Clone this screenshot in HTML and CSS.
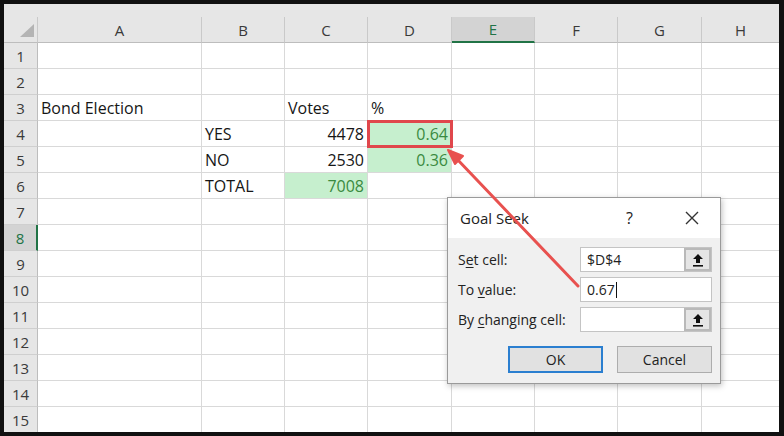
FILE: index.html
```html
<!DOCTYPE html>
<html>
<head>
<meta charset="utf-8">
<link rel="stylesheet" href="styles.css">
</head>
<body>
<div class="frame">
  <div class="strip"></div>
  <div class="sheet">
    <div class="hd corner"><span class="tri"></span></div>
    <div class="hd">A</div><div class="hd">B</div><div class="hd">C</div><div class="hd">D</div><div class="hd sel-col">E</div><div class="hd">F</div><div class="hd">G</div><div class="hd">H</div>

    <div class="rh">1</div><div class="c"></div><div class="c"></div><div class="c"></div><div class="c"></div><div class="c"></div><div class="c"></div><div class="c"></div><div class="c"></div>
    <div class="rh">2</div><div class="c"></div><div class="c"></div><div class="c"></div><div class="c"></div><div class="c"></div><div class="c"></div><div class="c"></div><div class="c"></div>
    <div class="rh">3</div><div class="c">Bond Election</div><div class="c"></div><div class="c">Votes</div><div class="c">%</div><div class="c"></div><div class="c"></div><div class="c"></div><div class="c"></div>
    <div class="rh">4</div><div class="c"></div><div class="c">YES</div><div class="c num">4478</div><div class="c num good boxed">0.64</div><div class="c"></div><div class="c"></div><div class="c"></div><div class="c"></div>
    <div class="rh">5</div><div class="c"></div><div class="c">NO</div><div class="c num">2530</div><div class="c num good">0.36</div><div class="c"></div><div class="c"></div><div class="c"></div><div class="c"></div>
    <div class="rh">6</div><div class="c"></div><div class="c">TOTAL</div><div class="c num good">7008</div><div class="c"></div><div class="c"></div><div class="c"></div><div class="c"></div><div class="c"></div>
    <div class="rh">7</div><div class="c"></div><div class="c"></div><div class="c"></div><div class="c"></div><div class="c"></div><div class="c"></div><div class="c"></div><div class="c"></div>
    <div class="rh sel-row">8</div><div class="c"></div><div class="c"></div><div class="c"></div><div class="c"></div><div class="c"></div><div class="c"></div><div class="c"></div><div class="c"></div>
    <div class="rh">9</div><div class="c"></div><div class="c"></div><div class="c"></div><div class="c"></div><div class="c"></div><div class="c"></div><div class="c"></div><div class="c"></div>
    <div class="rh">10</div><div class="c"></div><div class="c"></div><div class="c"></div><div class="c"></div><div class="c"></div><div class="c"></div><div class="c"></div><div class="c"></div>
    <div class="rh">11</div><div class="c"></div><div class="c"></div><div class="c"></div><div class="c"></div><div class="c"></div><div class="c"></div><div class="c"></div><div class="c"></div>
    <div class="rh">12</div><div class="c"></div><div class="c"></div><div class="c"></div><div class="c"></div><div class="c"></div><div class="c"></div><div class="c"></div><div class="c"></div>
    <div class="rh">13</div><div class="c"></div><div class="c"></div><div class="c"></div><div class="c"></div><div class="c"></div><div class="c"></div><div class="c"></div><div class="c"></div>
    <div class="rh">14</div><div class="c"></div><div class="c"></div><div class="c"></div><div class="c"></div><div class="c"></div><div class="c"></div><div class="c"></div><div class="c"></div>
    <div class="rh">15</div><div class="c"></div><div class="c"></div><div class="c"></div><div class="c"></div><div class="c"></div><div class="c"></div><div class="c"></div><div class="c"></div>
  </div>

  <div class="dialog">
    <div class="dtitle">
      <span class="dname">Goal Seek</span>
      <span class="dq">?</span>
      <span class="dx"><svg width="16" height="16" viewBox="0 0 16 16"><path d="M2 2 L14 14 M14 2 L2 14" stroke="#333" stroke-width="1.4" fill="none"/></svg></span>
    </div>
    <div class="dbody">
      <div class="frow">
        <span class="lbl">S<u>e</u>t cell:</span>
        <div class="inp"><span class="val">$D$4</span><span class="pick"><svg width="12" height="14" viewBox="0 0 12 14"><path d="M6 1 L11 6 L8 6 L8 10 L4 10 L4 6 L1 6 Z" fill="#111"/><rect x="1" y="12" width="10" height="1.6" fill="#111"/></svg></span></div>
      </div>
      <div class="frow">
        <span class="lbl">To <u>v</u>alue:</span>
        <div class="inp"><span class="val">0.67<span class="caret"></span></span></div>
      </div>
      <div class="frow">
        <span class="lbl">By <u>c</u>hanging cell:</span>
        <div class="inp"><span class="val"></span><span class="pick"><svg width="12" height="14" viewBox="0 0 12 14"><path d="M6 1 L11 6 L8 6 L8 10 L4 10 L4 6 L1 6 Z" fill="#111"/><rect x="1" y="12" width="10" height="1.6" fill="#111"/></svg></span></div>
      </div>
      <div class="brow">
        <button class="btn ok">OK</button>
        <button class="btn">Cancel</button>
      </div>
    </div>
  </div>

  <svg class="arrow" width="784" height="436" viewBox="0 0 784 436">
    <line x1="578" y1="286" x2="456" y2="158" stroke="#e8514f" stroke-width="3" stroke-linecap="round"/>
    <path d="M448 150 L463 156 L455 164 Z" fill="#e8514f" stroke="#e8514f" stroke-width="2" stroke-linejoin="round"/>
  </svg>
</div>
</body>
</html>
```
FILE: styles.css
```css
* { box-sizing: border-box; }
html, body { margin: 0; padding: 0; background: #fff; }
body { font-family: "Open Sans", "Liberation Sans", sans-serif; color: #222; }

.frame {
  position: relative;
  width: 784px;
  height: 436px;
  border-style: solid;
  border-color: #111;
  border-width: 4px 5px 4px 4px;
  overflow: hidden;
  background: #fff;
}

.strip { height: 13px; background: #e6e6e6; }

.sheet {
  display: grid;
  grid-template-columns: 34px 164px 83px 83px 84px 83px 83px 84px 78px;
  grid-auto-rows: 26px;
}

.hd {
  background: #e6e6e6;
  border-right: 1px solid #c9c9c9;
  border-bottom: 1px solid #bdbdbd;
  display: flex;
  align-items: center;
  justify-content: center;
  font-size: 15px;
  color: #3a3a3a;
}
.hd.sel-col { background: #d3d3d3; border-bottom: 2px solid #217346; color: #217346; }

.corner { position: relative; }
.tri {
  position: absolute;
  right: 3px;
  bottom: 5px;
  width: 0; height: 0;
  border-left: 14px solid transparent;
  border-bottom: 13px solid #b4b4b4;
}

.rh {
  background: #e6e6e6;
  border-right: 1px solid #bdbdbd;
  border-bottom: 1px solid #cfcfcf;
  display: flex;
  align-items: center;
  justify-content: center;
  font-size: 15px;
  color: #3a3a3a;
}
.rh.sel-row { background: #d3d3d3; border-right: 2px solid #217346; color: #217346; }

.c {
  border-right: 1px solid #d9d9d9;
  border-bottom: 1px solid #d9d9d9;
  display: flex;
  align-items: center;
  padding: 0 3px;
  font-size: 16px;
  white-space: nowrap;
  color: #161616;
}
.c.num { justify-content: flex-end; }
.c.good { background: #c6efce; color: #3a8a3f; }
.c.boxed { outline: 3px solid #e0474c; outline-offset: -2px; position: relative; z-index: 1; }

.dialog {
  position: absolute;
  left: 443px;
  top: 193px;
  width: 274px;
  height: 187px;
  background: #f0f0f0;
  border: 1px solid #9a9a9a;
  box-shadow: 1px 2px 6px rgba(0,0,0,0.25);
  z-index: 2;
}
.dtitle {
  height: 40px;
  background: #fff;
  display: flex;
  align-items: center;
  padding: 0 0 0 12px;
  font-size: 15px;
  color: #222;
}
.dname { flex: 1; }
.dq { width: 58px; font-size: 16px; }
.dx { width: 36px; display: flex; align-items: center; }

.dbody { padding: 9px 8px 0 10px; }
.frow {
  display: flex;
  align-items: center;
  justify-content: space-between;
  height: 25px;
  margin-bottom: 5px;
}
.lbl { font-size: 14px; color: #222; }
.lbl u { text-decoration-thickness: 1px; text-underline-offset: 2px; }
.inp {
  width: 132px;
  height: 25px;
  background: #fff;
  border: 1px solid #c4c4c4;
  display: flex;
  align-items: stretch;
}
.val {
  flex: 1;
  display: flex;
  align-items: center;
  padding-left: 6px;
  font-size: 14px;
  color: #222;
}
.caret { display: inline-block; width: 1px; height: 16px; background: #111; margin-left: 1px; }
.pick {
  width: 27px;
  background: #e5e5e5;
  border: 2px solid #b9b9b9;
  display: flex;
  align-items: center;
  justify-content: center;
}

.brow {
  display: flex;
  justify-content: flex-end;
  gap: 14px;
  margin-top: 14px;
}
.btn {
  width: 95px;
  height: 27px;
  background: #e1e1e1;
  border: 1px solid #adadad;
  font-family: "Open Sans", "Liberation Sans", sans-serif;
  font-size: 14px;
  color: #222;
  padding: 0;
}
.btn.ok { border: 2px solid #2b7fd0; }

.arrow { position: absolute; left: -4px; top: -4px; z-index: 3; pointer-events: none; }
```
